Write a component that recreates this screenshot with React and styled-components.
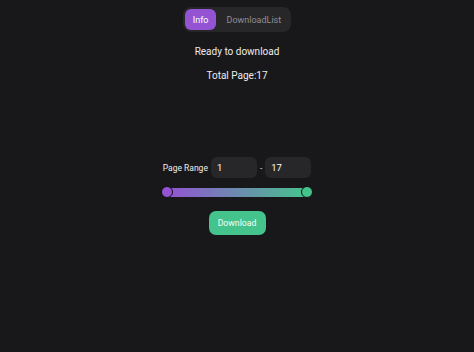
import React, { useState } from "react";
import styled, { createGlobalStyle } from "styled-components";

const Global = createGlobalStyle`
  html, body { margin: 0; padding: 0; background: #18181b; }
  body { font-family: "Segoe UI", Roboto, Lato, sans-serif; color: #ececec; }
  * { box-sizing: border-box; }
`;

const Page = styled.div`
  width: 474px;
  height: 352px;
  display: flex;
  flex-direction: column;
  align-items: center;
  padding-top: 7px;
`;

const Tabs = styled.div`
  display: flex;
  align-items: center;
  gap: 2px;
  height: 25px;
  padding: 2px;
  border-radius: 8px;
  background: #27272a;
`;

const Tab = styled.button`
  height: 21px;
  padding: 0 8px;
  border: none;
  border-radius: 6px;
  font-family: inherit;
  font-size: 9px;
  background: ${p => (p.$active ? "#9353d3" : "transparent")};
  color: ${p => (p.$active ? "#ffffff" : "#8e8e95")};
`;

const Status = styled.div`
  margin-top: 12px;
  font-size: 10px;
  line-height: 16px;
`;

const Total = styled.div`
  margin-top: 8px;
  font-size: 10px;
  line-height: 16px;
`;

const RangeRow = styled.div`
  margin-top: 73px;
  display: flex;
  align-items: center;
  gap: 3px;
  font-size: 8.5px;
`;

const Input = styled.input`
  width: 46px;
  height: 21px;
  border: none;
  border-radius: 6px;
  background: #27272a;
  color: #ffffff;
  font-family: inherit;
  font-size: 9.5px;
  padding: 0 6px;
  outline: none;
`;

const Dash = styled.span`
  color: #cfcfcf;
`;

const Slider = styled.div`
  position: relative;
  margin-top: 7px;
  width: 152px;
  height: 14px;
  display: flex;
  align-items: center;
  padding: 0 6px;
`;

const Track = styled.div`
  width: 100%;
  height: 9px;
  background: linear-gradient(90deg, #9353d3, #45c38c);
`;

const Thumb = styled.div`
  position: absolute;
  top: 1px;
  width: 12px;
  height: 12px;
  border-radius: 50%;
  border: 1.5px solid #111113;
  background: ${p => p.$color};
  left: ${p => p.$left};
`;

const DownloadButton = styled.button`
  margin-top: 12px;
  width: 57px;
  height: 24px;
  border: none;
  border-radius: 7px;
  background: #45c38c;
  color: #f4fff9;
  font-family: inherit;
  font-size: 8.7px;
`;

export default function App() {
  const [tab, setTab] = useState("info");
  return (
    <Page>
      <Global />
      <Tabs>
        <Tab $active={tab === "info"} onClick={() => setTab("info")}>Info</Tab>
        <Tab $active={tab === "list"} onClick={() => setTab("list")}>DownloadList</Tab>
      </Tabs>
      <Status>Ready to download</Status>
      <Total>Total Page:17</Total>
      <RangeRow>
        <span>Page Range</span>
        <Input defaultValue="1" />
        <Dash>-</Dash>
        <Input defaultValue="17" />
      </RangeRow>
      <Slider>
        <Track />
        <Thumb $color="#9353d3" $left="0px" />
        <Thumb $color="#45c38c" $left="140px" />
      </Slider>
      <DownloadButton>Download</DownloadButton>
    </Page>
  );
}
